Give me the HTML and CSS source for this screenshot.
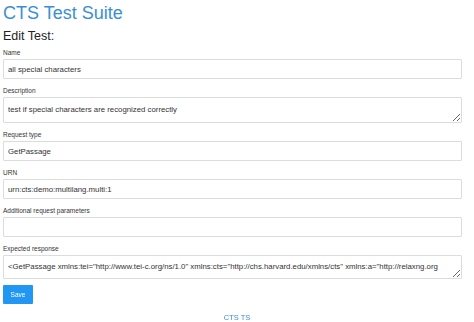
FILE: index.html
```html
<!DOCTYPE html>
<html>
<head>
<meta charset="utf-8">
<link rel="stylesheet" href="styles.css">
</head>
<body>
<div class="page">
  <h1 class="title">CTS Test Suite</h1>
  <h2 class="subtitle">Edit Test:</h2>
  <form class="form">
    <div class="group">
      <label class="label">Name</label>
      <input class="field" type="text" value="all special characters">
    </div>
    <div class="group">
      <label class="label">Description</label>
      <textarea class="field area">test if special characters are recognized correctly</textarea>
    </div>
    <div class="group">
      <label class="label">Request type</label>
      <input class="field" type="text" value="GetPassage">
    </div>
    <div class="group">
      <label class="label">URN</label>
      <input class="field" type="text" value="urn:cts:demo:multilang.multi:1">
    </div>
    <div class="group">
      <label class="label">Additional request parameters</label>
      <input class="field" type="text" value="">
    </div>
    <div class="group">
      <label class="label">Expected response</label>
      <textarea class="field area scroll">&lt;GetPassage xmlns:tei="http://www.tei-c.org/ns/1.0" xmlns:cts="http://chs.harvard.edu/xmlns/cts" xmlns:a="http://relaxng.org
/ns/compatibility/annotations/1.0"&gt;&lt;request&gt;&lt;requestName&gt;GetPassage&lt;/requestName&gt;&lt;requestUrn&gt;urn:cts:demo:multilang.multi:1&lt;/requestUrn&gt;&lt;/request&gt;&lt;/GetPassage&gt;</textarea>
    </div>
    <div class="actions">
      <button class="btn" type="button">Save</button>
    </div>
  </form>
  <footer class="footer">CTS TS</footer>
</div>
</body>
</html>
```
FILE: styles.css
```css
html, body {
  margin: 0;
  padding: 0;
  background: #ffffff;
}
body {
  font-family: "Liberation Sans", Arial, sans-serif;
  color: #333333;
}
.page {
  padding: 0 12px 0 3px;
  display: flex;
  flex-direction: column;
}
.title {
  margin: 2px 0 0 0;
  font-size: 18px;
  line-height: 22px;
  font-weight: normal;
  color: #3a8fd3;
}
.subtitle {
  margin: 4px 0 0 0;
  font-size: 12.5px;
  line-height: 16px;
  font-weight: normal;
  color: #222222;
}
.form {
  margin-top: 5px;
  display: flex;
  flex-direction: column;
}
.group {
  display: flex;
  flex-direction: column;
  margin-bottom: 8px;
}
.label {
  font-size: 6.5px;
  line-height: 8px;
  margin-bottom: 2px;
  color: #333333;
}
.field {
  box-sizing: border-box;
  height: 20px;
  width: 100%;
  margin: 0;
  border: 1px solid #dcdcdc;
  border-radius: 1px;
  padding: 0 4px;
  font-family: "Liberation Sans", Arial, sans-serif;
  font-size: 7.8px;
  color: #333333;
  background: #ffffff;
  outline: none;
}
.area {
  height: 26px;
  padding: 7px 4px 6px 4px;
  line-height: 10px;
  resize: vertical;
}
.scroll {
  height: 24px;
  padding: 2px 4px 0 4px;
  line-height: 18px;
  white-space: pre-wrap;
  overflow-x: hidden;
  overflow-y: scroll;
}
.scroll::-webkit-scrollbar {
  width: 7px;
}
.scroll::-webkit-scrollbar-track {
  background: #ffffff;
}
.scroll::-webkit-scrollbar-thumb {
  background: #ffffff;
}
.scroll::-webkit-scrollbar-button:single-button {
  display: block;
  height: 7px;
  background: #ffffff;
}
.scroll::-webkit-scrollbar-button:single-button:vertical:decrement {
  background: linear-gradient(to top, transparent 2px, #b0b0b0 2px, #b0b0b0 3px, transparent 3px) center / 3px 5px no-repeat;
}
.scroll::-webkit-scrollbar-button:single-button:vertical:increment {
  background: linear-gradient(to bottom, transparent 2px, #b0b0b0 2px, #b0b0b0 3px, transparent 3px) center / 3px 5px no-repeat;
}
.actions {
  margin-top: -2px;
  display: flex;
}
.btn {
  width: 30px;
  height: 19px;
  border: none;
  border-radius: 1px;
  background: #2196f3;
  color: #ffffff;
  font-family: "Liberation Sans", Arial, sans-serif;
  font-size: 6.5px;
  padding: 0;
}
.footer {
  margin-top: 9px;
  text-align: center;
  font-size: 7.5px;
  line-height: 10px;
  color: #3a8fd3;
  padding-left: 9px;
}
```
